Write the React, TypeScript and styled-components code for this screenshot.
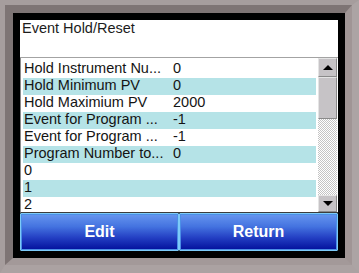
import styled, { createGlobalStyle } from 'styled-components';

const GlobalStyle = createGlobalStyle`
  html, body {
    margin: 0;
    padding: 0;
    background: #a9a0a0;
  }
  body {
    font-family: 'Liberation Sans', Arial, sans-serif;
  }
`;

const Bezel = styled.div`
  width: 359px;
  height: 273px;
  box-sizing: border-box;
  border-style: solid;
  border-width: 5px 7px 8px 5px;
  border-color: #a69d9d #aca4a4 #aba2a2 #a69d9d;
`;

const Bevel = styled.div`
  height: 100%;
  box-sizing: border-box;
  border-style: solid;
  border-width: 8px 7px 7px 8px;
  border-color: #7e7474 #a09595 #a39999 #7e7474;
`;

const Screen = styled.div`
  height: 100%;
  box-sizing: border-box;
  background: #000;
  padding: 7px;
  display: flex;
  flex-direction: column;
`;

const Title = styled.div`
  height: 38px;
  box-sizing: border-box;
  background: #fff;
  border-bottom: 1px solid #a3a3a3;
  padding: 0 2px;
  font-size: 14.5px;
  line-height: 16px;
  color: #1c1c1c;
`;

const ListArea = styled.div`
  height: 155px;
  box-sizing: border-box;
  display: flex;
  background: #fff;
  border-left: 1px solid #8c8c8c;
  border-bottom: 1px solid #3c3c3c;
`;

const Rows = styled.div`
  flex: 1;
  padding: 3px 2px 0 2px;
  overflow: hidden;
`;

const Row = styled.div<{ $alt: boolean }>`
  height: 17px;
  display: grid;
  grid-template-columns: 149px 1fr;
  padding-left: 1px;
  background: ${(props) => (props.$alt ? '#b5e3e7' : '#fff')};
  font-size: 14.5px;
  line-height: 14px;
  color: #141414;
  white-space: nowrap;
`;

const ScrollBar = styled.div`
  width: 19px;
  margin-right: 1px;
  display: flex;
  flex-direction: column;
`;

const ScrollButton = styled.div<{ $h: number }>`
  height: ${(props) => props.$h}px;
  box-sizing: border-box;
  background: #c6c3c6;
  border: 1px solid #8a8a8a;
  border-top-color: #e4e4e4;
  border-left-color: #e4e4e4;
  display: flex;
  align-items: center;
  justify-content: center;
`;

const Thumb = styled.div`
  height: 42px;
  box-sizing: border-box;
  background: #c6c3c6;
  border: 1px solid #8a8a8a;
  border-top-color: #e4e4e4;
  border-left-color: #e4e4e4;
`;

const Track = styled.div`
  flex: 1;
  background: repeating-conic-gradient(#c4c4c4 0 25%, #fff 0 50%) 0 0 / 2px 2px;
`;

const Arrow = styled.div<{ $down?: boolean }>`
  width: 0;
  height: 0;
  border-left: 5px solid transparent;
  border-right: 5px solid transparent;
  ${(props) =>
    props.$down ? 'border-top: 5px solid #000;' : 'border-bottom: 5px solid #000;'}
`;

const ButtonBar = styled.div`
  flex: 1;
  display: grid;
  grid-template-columns: 1fr 1fr;
`;

const ActionButton = styled.button`
  box-sizing: border-box;
  margin: 0;
  border: 1px solid #7ccaf8;
  box-shadow: inset 0 0 0 1px #4b8fe6;
  border-radius: 1px;
  background: linear-gradient(#6796ef 0%, #4473e0 35%, #2440c4 65%, #02109c 100%);
  color: #fff;
  font-family: 'Liberation Sans', Arial, sans-serif;
  font-weight: bold;
  font-size: 16px;
  padding: 0;
`;

const rows: [string, string][] = [
  ['Hold Instrument Nu...', '0'],
  ['Hold Minimum PV', '0'],
  ['Hold Maximium PV', '2000'],
  ['Event for Program ...', '-1'],
  ['Event for Program ...', '-1'],
  ['Program Number to...', '0'],
  ['0', ''],
  ['1', ''],
  ['2', ''],
];

function App() {
  return (
    <>
      <GlobalStyle />
      <Bezel>
        <Bevel>
          <Screen>
            <Title>Event Hold/Reset</Title>
            <ListArea>
              <Rows>
                {rows.map(([label, value], i) => (
                  <Row key={i} $alt={i % 2 === 1}>
                    <span>{label}</span>
                    <span>{value}</span>
                  </Row>
                ))}
              </Rows>
              <ScrollBar>
                <ScrollButton $h={19}>
                  <Arrow />
                </ScrollButton>
                <Thumb />
                <Track />
                <ScrollButton $h={17}>
                  <Arrow $down />
                </ScrollButton>
              </ScrollBar>
            </ListArea>
            <ButtonBar>
              <ActionButton>Edit</ActionButton>
              <ActionButton>Return</ActionButton>
            </ButtonBar>
          </Screen>
        </Bevel>
      </Bezel>
    </>
  );
}

export default App;
